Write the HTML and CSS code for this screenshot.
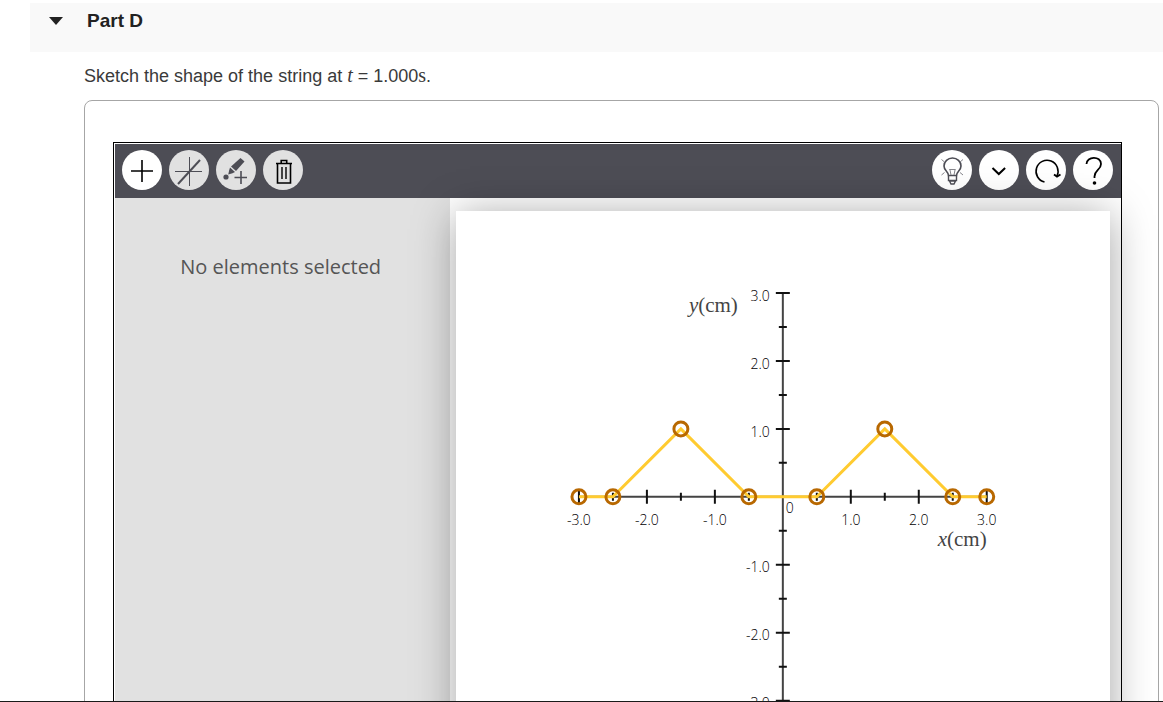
FILE: index.html
```html
<!DOCTYPE html>
<html lang="en">
<head>
    <meta charset="UTF-8">
    <meta name="viewport" content="width=device-width, initial-scale=1.0">
    <title>Part D</title>
    <link rel="stylesheet" href="styles.css">
</head>
<body>
    <div class="page">
        <h2 class="part-header">
            <button class="part-toggle" type="button" aria-expanded="true">
                <svg class="caret" viewBox="0 0 14 8" aria-hidden="true"><path d="M0 0h14L7 8z"/></svg>
                <span>Part D</span>
            </button>
        </h2>

        <div class="part-body">
            <p class="question">Sketch the shape of the string at <i class="math">t</i> = 1.000<span class="math">s</span>.</p>

            <div class="answer-box">
                <div class="applet">
                    <!-- Toolbar -->
                    <div class="toolbar">
                        <div class="tool-group">
                            <button class="tool" type="button" aria-label="Add element">
                                <svg viewBox="0 0 40 40"><path d="M20 10v22M9 21h22" stroke="#000" stroke-width="1.6"/></svg>
                            </button>
                            <button class="tool muted" type="button" aria-label="Add line">
                                <svg viewBox="0 0 40 40" stroke="#4d4d55">
                                    <path d="M20.500 7v29M6 21.500h27" stroke-width="1"/>
                                    <path d="M9 34L31 10" stroke-width="2"/>
                                </svg>
                            </button>
                            <button class="tool muted" type="button" aria-label="Add point">
                                <svg viewBox="0 0 40 40" fill="#4d4d55">
                                    <circle cx="10" cy="27" r="2.600"/>
                                    <path d="M24.500 8l4 3.500-8.500 9.500-5-4.500z"/>
                                    <path d="M14 17.500l5 4.500-2.500 1.200-4.300 1.300 1-4.200z"/>
                                    <path d="M25 21v13M18.500 27.500H31" stroke="#4d4d55" stroke-width="1.600"/>
                                </svg>
                            </button>
                            <button class="tool muted" type="button" aria-label="Delete">
                                <svg viewBox="0 0 40 40" stroke="#000">
                                    <path d="M14.500 14v19h13V14" stroke-width="1.600"/>
                                    <path d="M13 13.500h16M18.200 13v-2.500h5.500V13" stroke-width="1.600"/>
                                    <path d="M19 17v12M23 17v12" stroke-width="1.400"/>
                                </svg>
                            </button>
                        </div>
                        <div class="tool-group">
                            <button class="tool" type="button" aria-label="Hints">
                                <svg viewBox="0 0 40 40" stroke="#4d4d55">
                                    <path d="M16.500 25.500c0-4-4.500-4.500-4.500-9.500a8.500 8 0 0 1 17 0c0 5-4.500 5.500-4.500 9.500z" stroke-width="1.600"/>
                                    <path d="M16.500 25.500v5h8v-5M17.500 31l1.500 3h3l1.500-3z" stroke-width="1.400"/>
                                    <path d="M17.200 19.500h6.500M18 20l1 5M23 20l-1 5M9.500 9.500l3 2.500M31 9.500l-3 2.500M9.500 25l3-2.500M31 25l-3-2.500" stroke="#85858b" stroke-width="1"/>
                                </svg>
                            </button>
                            <button class="tool" type="button" aria-label="More options">
                                <svg viewBox="0 0 40 40"><path d="M13.500 18l6.300 6 6.300-6" stroke="#000" stroke-width="2"/></svg>
                            </button>
                            <button class="tool" type="button" aria-label="Reset">
                                <svg viewBox="0 0 40 40" stroke="#000">
                                    <path d="M18.500 32a11 11 0 1 1 12.500-6" stroke-width="1.600"/>
                                    <path d="M28 24.500l3 2 3.500-2" stroke-width="2"/>
                                </svg>
                            </button>
                            <button class="tool" type="button" aria-label="Help">
                                <svg viewBox="0 0 40 40" stroke="#000">
                                    <path d="M13.500 14c0-8 14.500-8.500 14.500 0 0 6-6.500 6-6.500 12.500v1.500" stroke-width="1.800"/>
                                    <circle cx="21.500" cy="33" r="1.800" fill="#000" stroke="none"/>
                                </svg>
                            </button>
                        </div>
                    </div>

                    <div class="workspace">
                        <div class="sidebar">No elements selected</div>

                        <!-- Graph -->
                        <div class="canvas">
                            <div class="sheet">
                                <svg class="graph" viewBox="0 0 654 580" role="img" aria-label="y(cm) against x(cm)">
                                    <g class="axis">
                                        <path d="M123 286H531M327 82V490"/>
                                    </g>
                                    <g class="ticks">
                                        <path d="M123 279v14M191 279v14M259 279v14M395 279v14M463 279v14M531 279v14"/>
                                        <path d="M157 282v8M225 282v8M293 282v8M361 282v8M429 282v8M497 282v8"/>
                                        <path d="M320 82h14M320 150h14M320 218h14M320 354h14M320 422h14M320 490h14"/>
                                        <path d="M323 116h8M323 184h8M323 252h8M323 320h8M323 388h8M323 456h8"/>
                                    </g>
                                    <g class="labels x-labels">
                                        <text x="123" y="314">-3.0</text>
                                        <text x="191" y="314">-2.0</text>
                                        <text x="259" y="314">-1.0</text>
                                        <text x="334" y="302">0</text>
                                        <text x="395" y="314">1.0</text>
                                        <text x="463" y="314">2.0</text>
                                        <text x="531" y="314">3.0</text>
                                    </g>
                                    <g class="labels y-labels">
                                        <text x="314" y="90">3.0</text>
                                        <text x="314" y="158">2.0</text>
                                        <text x="314" y="226">1.0</text>
                                        <text x="314" y="361">-1.0</text>
                                        <text x="314" y="429">-2.0</text>
                                        <text x="314" y="497">-3.0</text>
                                    </g>
                                    <text class="axis-title" x="233" y="101"><tspan class="var">y</tspan>(cm)</text>
                                    <text class="axis-title" x="482" y="335"><tspan class="var">x</tspan>(cm)</text>
                                    <polyline class="curve" points="123,286 157,286 225,218 293,286 361,286 429,218 497,286 531,286"/>
                                    <g class="points">
                                        <circle cx="123" cy="286" r="7"/>
                                        <circle cx="157" cy="286" r="7"/>
                                        <circle cx="225" cy="218" r="7"/>
                                        <circle cx="293" cy="286" r="7"/>
                                        <circle cx="361" cy="286" r="7"/>
                                        <circle cx="429" cy="218" r="7"/>
                                        <circle cx="497" cy="286" r="7"/>
                                        <circle cx="531" cy="286" r="7"/>
                                    </g>
                                </svg>
                            </div>
                        </div>
                    </div>
                </div>
            </div>
        </div>
    </div>
</body>
</html>
```
FILE: styles.css
```css
* {
    margin: 0;
    padding: 0;
    box-sizing: border-box;
}

body {
    background: #fff;
    color: #3a3a3a;
    font-family: "Liberation Sans", Arial, sans-serif;
}

.page {
    height: 100vh;
    overflow: hidden;
    padding-top: 3px;
    border-bottom: 1px solid #1a1a1a;
}

.part-header {
    height: 49px;
    margin-left: 30px;
    padding: 6px 19px;
    background: #f9f9f9;
}

.part-toggle {
    display: flex;
    align-items: center;
    gap: 24px;
    border: none;
    background: none;
    color: #222;
    font: bold 19px/24px "Liberation Sans", Arial, sans-serif;
    cursor: pointer;
}

.caret {
    width: 14px;
    height: 8px;
    fill: #222;
}

.part-body {
    padding: 12px 4px 0 84px;
}

.question {
    font-size: 18px;
    line-height: 24px;
}

.math {
    font-family: "Liberation Serif", "Times New Roman", serif;
    font-size: 20px;
    line-height: 20px;
}

.answer-box {
    margin-top: 12px;
    padding: 41px 36px 0 28px;
    border: 1px solid #a6a6a6;
    border-radius: 8px;
}

.applet {
    padding: 1px 0 0 1px;
    border: 1px solid #000;
}

.toolbar {
    display: flex;
    justify-content: space-between;
    padding: 6px 8px 8px 7px;
    background: #4d4d55;
}

.tool-group {
    display: flex;
    gap: 7px;
}

.tool {
    width: 40px;
    height: 40px;
    border: none;
    border-radius: 50%;
    background: #fff;
    cursor: pointer;
}

.tool.muted {
    background: #e1e1e1;
}

.tool svg {
    display: block;
    width: 40px;
    height: 40px;
    fill: none;
}

.tool svg[fill] {
    fill: #4d4d55;
}

.workspace {
    display: grid;
    grid-template-columns: 1fr 2fr;
}

.sidebar {
    padding: 53px 4px 0 0;
    background: #e1e1e1;
    color: #555;
    font: 400 20px/32px "Open Sans", "Noto Sans", sans-serif;
    text-align: center;
}

.canvas {
    padding: 13px 11px 0 6px;
    background: #fff;
}

.sheet {
    background: #fff;
    box-shadow: 0 4px 40px rgba(0, 0, 0, 0.36);
}

.graph {
    display: block;
    width: 100%;
}

.axis {
    stroke: #444;
    stroke-width: 2;
}

.ticks {
    stroke: #111;
    stroke-width: 2;
}

.labels {
    fill: #000;
    font: 300 14px "Open Sans", "Noto Sans", sans-serif;
}

.x-labels {
    text-anchor: middle;
}

.y-labels {
    text-anchor: end;
}

.axis-title {
    fill: #444;
    font: 21px "Liberation Serif", "Times New Roman", serif;
}

.var {
    font-style: italic;
}

.curve {
    fill: none;
    stroke: #ffcb30;
    stroke-width: 3;
}

.points {
    fill: none;
    stroke: #b86800;
    stroke-width: 3;
}
```
